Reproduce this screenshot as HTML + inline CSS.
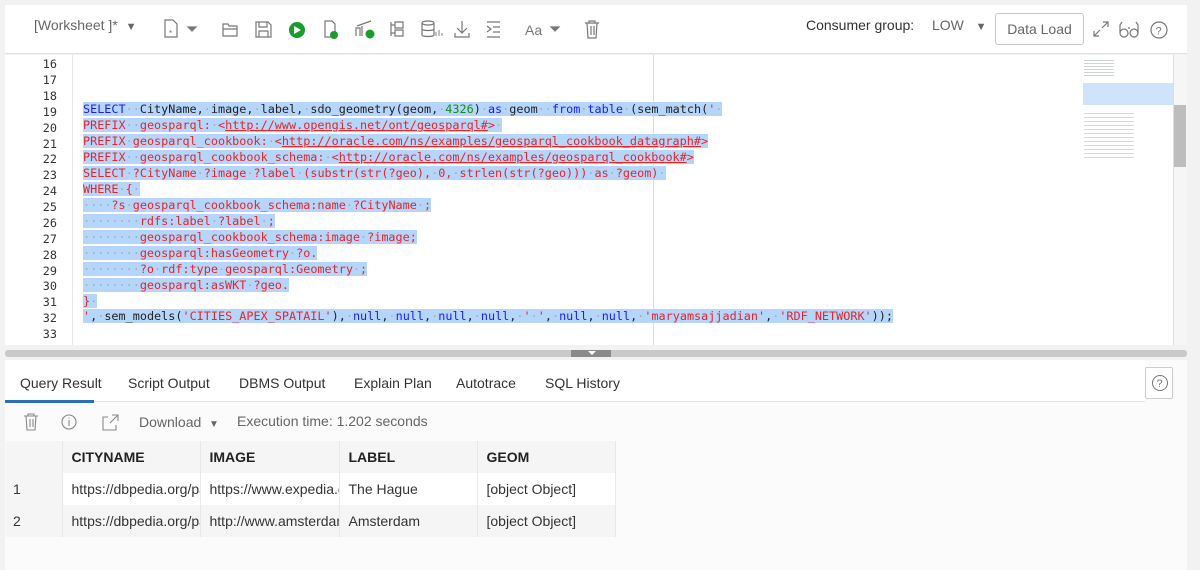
<!DOCTYPE html>
<html><head><meta charset="utf-8"><style>
*{margin:0;padding:0;box-sizing:border-box}
body{width:1200px;height:570px;background:#f2f2f2;font-family:"Liberation Sans",sans-serif;position:relative;overflow:hidden}
.abs{position:absolute}
.top{left:5px;top:5px;width:1182px;height:49px;background:#fff;border-bottom:1px solid #e0e0e0}
.tb{color:#666;font-size:14px;position:absolute;top:17px}
.ic{position:absolute;top:19px}
.ed{left:5px;top:55px;width:1182px;height:290px;background:#fff}
.gut{left:5px;top:55px;width:68px;height:290px;border-right:1px solid #e6e6e6;background:#fff}
.ln{position:absolute;left:0;width:52px;text-align:right;font-family:"DejaVu Sans Mono",monospace;font-size:11.8px;color:#333}
.code{position:absolute;left:83px;font-family:"DejaVu Sans Mono",monospace;font-size:11.8px;white-space:pre;line-height:15.9px;height:15.9px}
.sel{background:#b5d5fb}
b{font-weight:normal;color:#aaa}
.k{color:#1a1aff}.r{color:#e3262a}.g{color:#178a17}.d{color:#222}
u{text-decoration:underline;text-decoration-color:#e3262a}
.bot{left:5px;top:360px;width:1182px;height:210px;background:#fbfbfb}
.tab{position:absolute;top:375px;font-size:14px;color:#333}
th,td{font-size:14px;text-align:left;padding-left:9px;height:32px;border-right:1px solid #e8e8e8;overflow:hidden;white-space:nowrap;color:#333}
th{font-weight:bold;background:#f5f5f5;color:#222}
</style></head><body>
<div class="abs top"></div>
<div class="tb" style="left:34px">[Worksheet ]*&nbsp; <span style="font-size:11px">▼</span></div>
<svg class="abs" style="left:160px;top:18px" width="450" height="22" fill="none" stroke="#777" stroke-width="1.2">
<path d="M5 2h8l4 4v13H5z"/><text x="9" y="18" font-size="8" fill="#777" stroke="none">*</text>
<path d="M28 9l4 4 4-4z" fill="#777"/>
<path d="M63 6h5l1 2h8v10H63z M63 11h14"/>
<path d="M96 4h12l3 3v12H96z M99 4v5h8V4 M99 19v-6h9v6"/>
<circle cx="137" cy="12" r="8" fill="#1a9b2e" stroke="none"/><path d="M134 8l7 4-7 4z" fill="#fff" stroke="none"/>
<path d="M165 3h7l3 3v13h-10z"/><circle cx="174" cy="17" r="4" fill="#1a9b2e" stroke="none"/>
<path d="M196 18v-8h4v8 M202 18v-10 M197 8l14-5"/><circle cx="210" cy="16" r="4.5" fill="#1a9b2e" stroke="none"/>
<path d="M231 4v14 M231 7h4 M231 15h4 M235 4h8v6h-8z M235 12h8v6h-8z"/>
<ellipse cx="268" cy="5" rx="6" ry="2"/><path d="M262 5v12c0 2 12 2 12 0V5 M262 11c0 2 12 2 12 0"/><path d="M276 18v-4 M279 18v-6 M282 18v-3" stroke="#999"/>
<path d="M302 3v12 M297 10l5 5 5-5 M295 15v4h14v-4"/>
<path d="M327 4h13 M333 9h7 M333 14h7 M327 19h13 M327 8l4 3-4 3"/>
<text x="365" y="17" font-size="14" fill="#777" stroke="none" font-family="Liberation Sans">Aa</text><path d="M391 9l4 4 4-4z" fill="#777"/>
<path d="M425 5h14 M429 5V3h6v2 M427 5l1 15h8l1-15 M431 8v9 M434 8v9"/>
</svg>
<div class="tb" style="left:806px;color:#333">Consumer group:</div>
<div class="tb" style="left:932px">LOW&nbsp;&nbsp; <span style="font-size:11px">▼</span></div>
<div class="abs" style="left:995px;top:13px;width:89px;height:32px;border:1px solid #c8c8c8;border-radius:3px;font-size:14px;color:#666;text-align:center;line-height:30px">Data Load</div>
<svg class="abs" style="left:1090px;top:18px" width="90" height="24" fill="none" stroke="#777" stroke-width="1.2">
<path d="M4 18l6-6 M4 13v5h5 M18 4l-6 6 M13 4h5v5"/>
<circle cx="34" cy="15" r="4"/><circle cx="44" cy="15" r="4"/><path d="M30 15V7l2-3 M48 15V7l-2-3 M38 10h2"/>
<circle cx="69" cy="12" r="8"/><text x="65.5" y="16.5" font-size="11" fill="#777" stroke="none">?</text>
</svg>

<div class="abs ed"></div>
<div class="abs gut"></div>
<div class="abs" style="left:653px;top:55px;width:1px;height:290px;background:#ddd"></div>
<div class="abs" style="left:1173px;top:55px;width:14px;height:290px;background:#f6f6f6;border-left:1px solid #ddd"></div>
<div class="abs" style="left:1174px;top:105px;width:12px;height:62px;background:#bdbdbd"></div>
<div class="abs" style="left:1083px;top:83px;width:90px;height:22px;background:#cfe3fb"></div>
<div class="abs" style="left:1084px;top:58px;width:30px;height:20px;background:repeating-linear-gradient(#fff 0 2px,#9aa 2px 3px);opacity:.5"></div>
<div class="abs" style="left:1084px;top:110px;width:50px;height:50px;background:repeating-linear-gradient(#fff 0 3px,#99b 3px 4px);opacity:.4"></div>

<div class="abs" style="left:5px;top:55px;width:68px">
<div class="ln" style="top:2px">16</div><div class="ln" style="top:18px">17</div><div class="ln" style="top:34px">18</div><div class="ln" style="top:50px">19</div><div class="ln" style="top:66px">20</div><div class="ln" style="top:82px">21</div><div class="ln" style="top:97px">22</div><div class="ln" style="top:113px">23</div><div class="ln" style="top:129px">24</div><div class="ln" style="top:145px">25</div><div class="ln" style="top:161px">26</div><div class="ln" style="top:177px">27</div><div class="ln" style="top:193px">28</div><div class="ln" style="top:209px">29</div><div class="ln" style="top:224px">30</div><div class="ln" style="top:240px">31</div><div class="ln" style="top:256px">32</div><div class="ln" style="top:272px">33</div>
</div>

<div class="code" style="top:102px"><span class="sel"><span class="k">SELECT</span><b>··</b><span class="d">CityName,<b>·</b>image,<b>·</b>label,<b>·</b>sdo_geometry(geom,<b>·</b></span><span class="g">4326</span><span class="d">)</span><b>·</b><span class="k">as</span><b>·</b><span class="d">geom</span><b>··</b><span class="k">from</span><b>·</b><span class="k">table</span><b>·</b><span class="d">(sem_match(</span><span class="r">'</span><b>·</b></span></div>
<div class="code r" style="top:118px"><span class="sel">PREFIX<b>··</b>geosparql:<b>·</b>&lt;<u>http://www.opengis.net/ont/geosparql#</u>&gt;<b>·</b></span></div>
<div class="code r" style="top:134px"><span class="sel">PREFIX<b>·</b>geosparql_cookbook:<b>·</b>&lt;<u>http://oracle.com/ns/examples/geosparql_cookbook_datagraph#</u>&gt;</span></div>
<div class="code r" style="top:150px"><span class="sel">PREFIX<b>··</b>geosparql_cookbook_schema:<b>·</b>&lt;<u>http://oracle.com/ns/examples/geosparql_cookbook#</u>&gt;</span></div>
<div class="code r" style="top:166px"><span class="sel">SELECT<b>·</b>?CityName<b>·</b>?image<b>·</b>?label<b>·</b>(substr(str(?geo),<b>·</b>0,<b>·</b>strlen(str(?geo)))<b>·</b>as<b>·</b>?geom)<b>·</b></span></div>
<div class="code r" style="top:182px"><span class="sel">WHERE<b>·</b>{<b>·</b></span></div>
<div class="code r" style="top:198px"><span class="sel"><b>····</b>?s<b>·</b>geosparql_cookbook_schema:name<b>·</b>?CityName<b>·</b>;</span></div>
<div class="code r" style="top:214px"><span class="sel"><b>········</b>rdfs:label<b>·</b>?label<b>·</b>;</span></div>
<div class="code r" style="top:230px"><span class="sel"><b>········</b>geosparql_cookbook_schema:image<b>·</b>?image;</span></div>
<div class="code r" style="top:246px"><span class="sel"><b>········</b>geosparql:hasGeometry<b>·</b>?o.</span></div>
<div class="code r" style="top:262px"><span class="sel"><b>········</b>?o<b>·</b>rdf:type<b>·</b>geosparql:Geometry<b>·</b>;</span></div>
<div class="code r" style="top:278px"><span class="sel"><b>········</b>geosparql:asWKT<b>·</b>?geo.</span></div>
<div class="code r" style="top:294px"><span class="sel">}<b>·</b></span></div>
<div class="code" style="top:309px"><span class="sel"><span class="r">'</span><span class="d">,<b>·</b>sem_models(</span><span class="r">'CITIES_APEX_SPATAIL'</span><span class="d">),</span><b>·</b><span class="k">null</span><span class="d">,</span><b>·</b><span class="k">null</span><span class="d">,</span><b>·</b><span class="k">null</span><span class="d">,</span><b>·</b><span class="k">null</span><span class="d">,</span><b>·</b><span class="r">'<b>·</b>'</span><span class="d">,</span><b>·</b><span class="k">null</span><span class="d">,</span><b>·</b><span class="k">null</span><span class="d">,</span><b>·</b><span class="r">'maryamsajjadian'</span><span class="d">,</span><b>·</b><span class="r">'RDF_NETWORK'</span><span class="d">));</span></span></div>

<div class="abs" style="left:5px;top:350px;width:1182px;height:7px;background:#c9c9c9;border-radius:3px"></div>
<div class="abs" style="left:571px;top:350px;width:40px;height:7px;background:#8a8a8a"></div>
<div class="abs" style="left:588px;top:351px;width:0;height:0;border-left:4px solid transparent;border-right:4px solid transparent;border-top:4px solid #fff"></div>

<div class="abs bot"></div>
<div class="abs" style="left:5px;top:360px;width:1140px;height:42px;background:#fff;border-bottom:1px solid #e2e2e2"></div>
<div class="abs" style="left:5px;top:400px;width:89px;height:3px;background:#2b6fb6"></div>
<div class="tab" style="left:20px">Query Result</div>
<div class="tab" style="left:128px">Script Output</div>
<div class="tab" style="left:239px">DBMS Output</div>
<div class="tab" style="left:354px">Explain Plan</div>
<div class="tab" style="left:456px">Autotrace</div>
<div class="tab" style="left:545px">SQL History</div>
<div class="abs" style="left:1145px;top:367px;width:28px;height:32px;border:1px solid #ccc;border-radius:2px;background:#fff"></div>
<svg class="abs" style="left:1151px;top:374px" width="18" height="18" fill="none" stroke="#777"><circle cx="9" cy="9" r="7.5"/><text x="5.5" y="13" font-size="11" fill="#777" stroke="none">?</text></svg>

<svg class="abs" style="left:22px;top:412px" width="100" height="20" fill="none" stroke="#888" stroke-width="1.1">
<path d="M2 4h14 M6 4V2h6v2 M4 4l1 14h8l1-14 M8 7v8 M11 7v8"/>
<circle cx="47" cy="10" r="7"/><path d="M47 8v6 M47 5.5v1"/>
<path d="M90 3h6v6 M96 3l-8 8 M86 5h-5v13h13v-5"/>
</svg>
<div class="abs" style="left:139px;top:414px;font-size:14px;color:#666">Download&nbsp; <span style="font-size:10px">▼</span></div>
<div class="abs" style="left:237px;top:413px;font-size:14px;color:#666">Execution time: 1.202 seconds</div>

<table class="abs" style="left:6px;top:441px;border-collapse:collapse;table-layout:fixed;width:609px">
<colgroup><col style="width:56px"><col style="width:138px"><col style="width:139px"><col style="width:138px"><col style="width:138px"></colgroup>
<tr><th style="background:#f5f5f5"></th><th>CITYNAME</th><th>IMAGE</th><th>LABEL</th><th>GEOM</th></tr>
<tr style="background:#fff"><td style="background:#f5f5f5;padding-left:7px">1</td><td>https://dbpedia.org/page/</td><td>https://www.expedia.com</td><td>The Hague</td><td>[object Object]</td></tr>
<tr style="background:#f5f5f5"><td style="padding-left:7px">2</td><td>https://dbpedia.org/page/</td><td>http://www.amsterdam.nl</td><td>Amsterdam</td><td>[object Object]</td></tr>
</table>
</body></html>
